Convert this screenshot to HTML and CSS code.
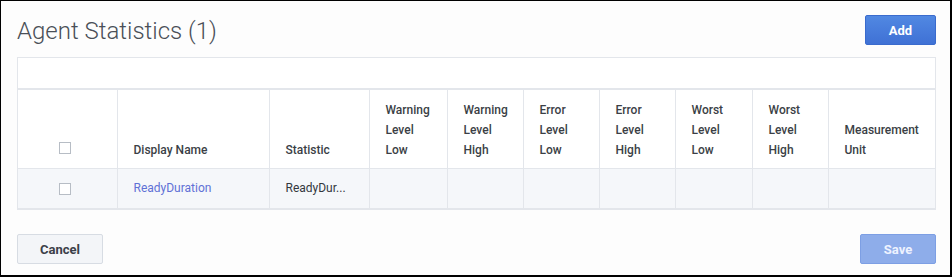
FILE: index.html
```html
<!DOCTYPE html>
<html lang="en">

<head>
    <meta charset="utf-8">
    <meta name="viewport" content="width=device-width, initial-scale=1.0">
    <title>Agent Statistics</title>
    <link rel="stylesheet" href="styles.css">
</head>

<body>
    <div class="dialog">
        <div class="dialog-header">
            <h1 class="title">Agent Statistics (1)</h1>
            <button class="btn btn-primary">Add</button>
        </div>
        <div class="grid">
            <div class="grid-toolbar"></div>
            <table class="grid-table">
                <colgroup>
                    <col class="col-check">
                    <col class="col-name">
                    <col class="col-stat">
                    <col class="col-wide">
                    <col class="col-level">
                    <col class="col-level">
                    <col class="col-level">
                    <col class="col-wide-sm">
                    <col class="col-level">
                    <col>
                </colgroup>
                <thead>
                    <tr>
                        <th class="check-cell"><span class="checkbox"></span></th>
                        <th>Display Name</th>
                        <th>Statistic</th>
                        <th>Warning<br>Level<br>Low</th>
                        <th>Warning<br>Level<br>High</th>
                        <th>Error<br>Level<br>Low</th>
                        <th>Error<br>Level<br>High</th>
                        <th>Worst<br>Level<br>Low</th>
                        <th>Worst<br>Level<br>High</th>
                        <th>Measurement<br>Unit</th>
                    </tr>
                </thead>
                <tbody>
                    <tr>
                        <td class="check-cell"><span class="checkbox"></span></td>
                        <td><a href="#" class="link">ReadyDuration</a></td>
                        <td>ReadyDur...</td>
                        <td></td>
                        <td></td>
                        <td></td>
                        <td></td>
                        <td></td>
                        <td></td>
                        <td></td>
                    </tr>
                </tbody>
            </table>
        </div>
        <div class="dialog-footer">
            <button class="btn btn-default">Cancel</button>
            <button class="btn btn-primary btn-disabled" disabled>Save</button>
        </div>
    </div>
</body>

</html>
```

FILE: styles.css
```css
*,
*::after,
*::before {
    margin: 0;
    padding: 0;
    box-sizing: border-box;
}

body {
    font-family: Roboto, 'Liberation Sans', sans-serif;
    background-color: #fff;
}

.dialog {
    width: 952px;
    height: 277px;
    border-style: solid;
    border-color: #000;
    border-width: 1px 2px 2px 1px;
    padding: 14px 14px 0 16px;
    background-color: #fdfdfd;
}

.dialog-header {
    display: flex;
    justify-content: space-between;
    align-items: center;
    height: 30px;
}

.title {
    font-size: 24px;
    font-weight: 300;
    color: #4a4f57;
    line-height: 30px;
    padding-top: 2px;
}

.btn {
    font-family: Roboto, 'Liberation Sans', sans-serif;
    font-size: 13px;
    font-weight: 700;
    height: 30px;
    border-radius: 2px;
    cursor: pointer;
}

.btn-primary {
    width: 71px;
    color: #fff;
    border: 1px solid #3a6bcd;
    background: linear-gradient(#5188e2, #3f71d5);
}

.btn-disabled {
    width: 76px;
    color: #eef3ff;
    border-color: #7d9fe4;
    background: #8eadea;
    cursor: default;
}

.btn-default {
    width: 86px;
    color: #3b4048;
    border: 1px solid #d7dce3;
    background-color: #f3f5f8;
}

.grid {
    margin-top: 12px;
    border: 1px solid #e3e6eb;
    border-bottom-width: 2px;
    background-color: #fff;
}

.grid-toolbar {
    height: 32px;
    border-bottom: 2px solid #e3e6eb;
}

.grid-table {
    width: 100%;
    border-collapse: collapse;
    table-layout: fixed;
    font-size: 12px;
}

.col-check {
    width: 99px;
}

.col-name {
    width: 152px;
}

.col-stat {
    width: 100px;
}

.col-wide {
    width: 78px;
}

.col-level {
    width: 76px;
}

.col-wide-sm {
    width: 77px;
}

.grid-table th,
.grid-table td {
    border-left: 1px solid #e3e6eb;
    text-align: left;
    padding-left: 16px;
}

.grid-table th:first-child,
.grid-table td:first-child {
    border-left: none;
}

.grid-table th {
    height: 78px;
    vertical-align: bottom;
    padding-bottom: 8px;
    font-weight: 500;
    line-height: 20px;
    color: #3b3f46;
}

.grid-table td {
    height: 40px;
    border-top: 1px solid #e3e6eb;
    background-color: #f5f7fa;
    color: #33373d;
}

.grid-table .check-cell {
    text-align: center;
    padding-left: 0;
    padding-right: 4px;
}

.checkbox {
    display: inline-block;
    width: 12px;
    height: 12px;
    border: 1px solid #b7bdc5;
    background-color: #fff;
    vertical-align: middle;
}

th .checkbox {
    margin-bottom: 4px;
}

.link {
    color: #5f71d6;
    text-decoration: none;
}

.dialog-footer {
    display: flex;
    justify-content: space-between;
    margin-top: 24px;
}
```
